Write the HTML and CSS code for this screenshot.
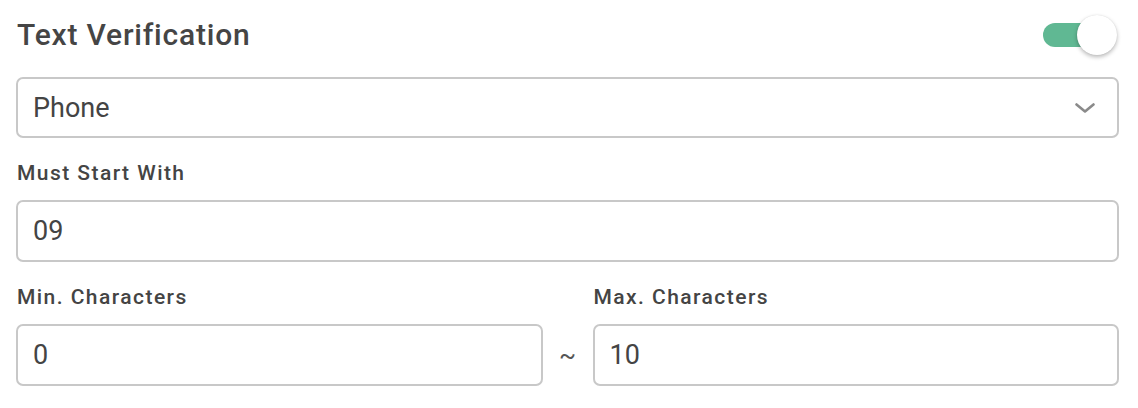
FILE: index.html
```html
<!DOCTYPE html>
<html lang="en">
<head>
<meta charset="utf-8">
<title>Text Verification</title>
<link rel="stylesheet" href="styles.css">
</head>
<body>
<div class="panel">
  <div class="header">
    <h1 class="title">Text Verification</h1>
    <div class="toggle" role="switch" aria-checked="true">
      <span class="track"></span>
      <span class="knob"></span>
    </div>
  </div>
  <div class="select">
    <span class="select-value">Phone</span>
    <svg class="chevron" width="20" height="10" viewBox="0 0 20 10"><path d="M1.5 1.5 L10 8.5 L18.5 1.5" fill="none" stroke="#8a8a8a" stroke-width="2.6" stroke-linecap="round" stroke-linejoin="round"/></svg>
  </div>
  <div class="label">Must Start With</div>
  <div class="input"><span>09</span></div>
  <div class="range">
    <div class="label range-label-min">Min. Characters</div>
    <div class="label range-label-max">Max. Characters</div>
    <div class="input"><span>0</span></div>
    <div class="tilde">~</div>
    <div class="input"><span>10</span></div>
  </div>
</div>
</body>
</html>
```
FILE: styles.css
```css
html, body {
  margin: 0;
  padding: 0;
  background: #ffffff;
}
body {
  font-family: Roboto, "Liberation Sans", Arial, sans-serif;
  color: #444444;
}
.panel {
  padding: 0 19px 0 16px;
}
.header {
  height: 70px;
  display: flex;
  align-items: center;
  justify-content: space-between;
}
.title {
  margin: 0 0 0 1px;
  font-size: 30px;
  line-height: 30px;
  font-weight: 500;
  letter-spacing: 0.8px;
  color: #454545;
}
.toggle {
  position: relative;
  width: 74px;
  height: 40px;
  margin-right: 2px;
  display: flex;
  align-items: center;
}
.track {
  display: block;
  width: 68px;
  height: 24px;
  border-radius: 12px;
  background: #60b893;
}
.knob {
  position: absolute;
  right: 0;
  top: 0;
  width: 40px;
  height: 40px;
  border-radius: 50%;
  background: #ffffff;
  box-shadow: 0 2px 4px rgba(0, 0, 0, 0.28), 0 0 1px rgba(0, 0, 0, 0.12);
}
.select {
  margin-top: 7px;
  height: 61px;
  box-sizing: border-box;
  border: 2px solid #c8c8c8;
  border-radius: 7px;
  display: flex;
  align-items: center;
  justify-content: space-between;
  padding: 0 22px 0 15px;
  font-size: 27px;
}
.chevron {
  display: block;
}
.label {
  margin: 23px 0 15px 1px;
  font-size: 21px;
  line-height: 24px;
  font-weight: 500;
  letter-spacing: 1.45px;
  color: #444444;
}
.input {
  height: 62px;
  box-sizing: border-box;
  border: 2px solid #c8c8c8;
  border-radius: 7px;
  display: flex;
  align-items: center;
  padding: 0 15px;
  font-size: 27px;
  color: #444444;
}
.range {
  display: grid;
  grid-template-columns: 1fr 50px 1fr;
}
.range-label-min {
  grid-column: 1;
}
.range-label-max {
  grid-column: 3;
}
.tilde {
  display: flex;
  align-items: center;
  justify-content: center;
  font-size: 25px;
  color: #555555;
}
```
